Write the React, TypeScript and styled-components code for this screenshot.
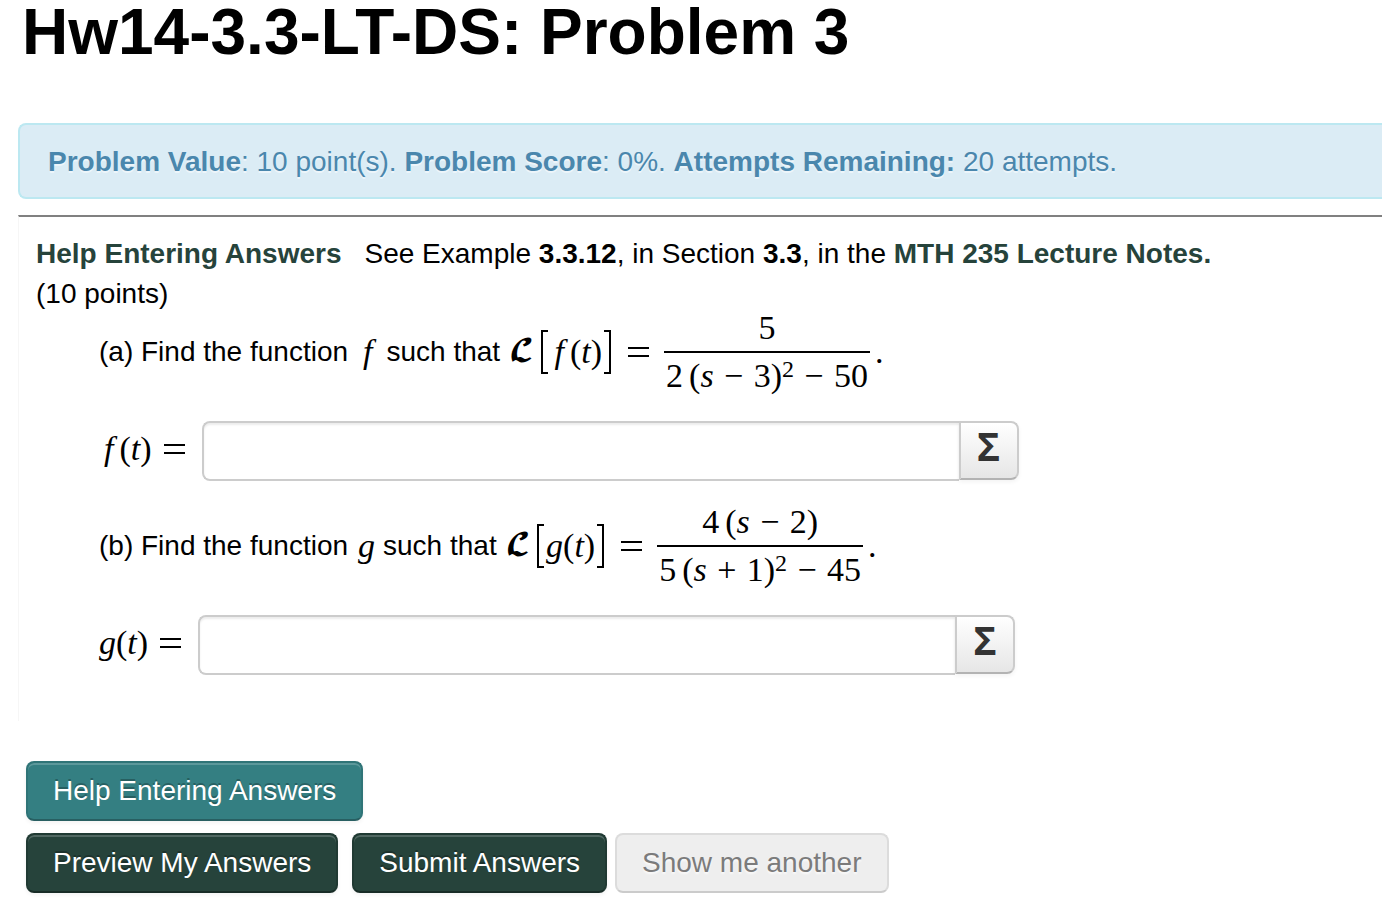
import React from "react";
import styled, { createGlobalStyle } from "styled-components";

const GlobalStyle = createGlobalStyle`
  *, *::before, *::after { box-sizing: border-box; }
  body {
    margin: 0;
    background: #fff;
    color: #000;
    font-family: "Liberation Sans", Arial, sans-serif;
    font-size: 28px;
    line-height: 40px;
    overflow-x: hidden;
  }
`;

const Page = styled.main`
  padding: 0 0 8px 18px;
`;

const Title = styled.h1`
  margin: 0 0 59px;
  padding-left: 4px;
  font-size: 64px;
  line-height: 64px;
  font-weight: 700;
`;

const Alert = styled.p`
  margin: 0 0 16px;
  padding: 17px 28px 15px;
  border: 2px solid #bce8f1;
  border-right: 0;
  border-radius: 8px 0 0 8px;
  background: #dbecf5;
  color: #4a87ad;
  text-shadow: 0 2px 0 rgba(255, 255, 255, 0.5);
`;

const Problem = styled.section`
  margin-bottom: 40px;
  padding: 17px 16px 19px 17px;
  border-top: 2px solid #808080;
  border-left: 1px solid #f6f6f6;
`;

const Intro = styled.p`
  margin: 0;
`;

const NotesLink = styled.a`
  color: #26433b;
  font-weight: 700;
  text-decoration: none;
`;

const HelpLink = styled(NotesLink)`
  margin-right: 23px;
`;

const Part = styled.div`
  padding-left: 63px;
`;

const Question = styled.div`
  display: flex;
  align-items: center;
  height: 76px;
  margin-bottom: 31px;
  white-space: pre;
`;

const MathText = styled.span`
  font-family: "Liberation Serif", "Times New Roman", serif;
  font-size: 34px;
`;

const Letter = styled.i<{ $wide: boolean }>`
  padding: ${(p) => (p.$wide ? "0 6px 0 5px" : "0")};
`;

const Variable = styled(MathText)`
  margin: 0 8px 0 10px;
`;

const Script = styled.span`
  margin: 0 7px 0 9px;
  font-family: "DejaVu Math TeX Gyre", "DejaVu Serif", serif;
  font-size: 28px;
`;

const Bracketed = styled(MathText)`
  position: relative;
  padding: 0 9px;
  line-height: 44px;

  &::before, &::after {
    content: "";
    position: absolute;
    top: 0;
    bottom: 0;
    width: 7px;
    border: 2px solid #000;
  }
  &::before { left: 0; border-right: 0; }
  &::after { right: 0; border-left: 0; }
`;

const Equals = styled.span`
  display: inline-block;
  width: 21px;
  height: 10px;
  border: solid #000;
  border-width: 2px 0;
  color: transparent;
  font-size: 8px;
  line-height: 8px;
  overflow: hidden;
`;

const EqualsGap = styled.span`
  display: flex;
  align-items: center;
  margin: 0 15px 0 17px;
`;

const Fraction = styled(MathText)`
  display: flex;
  flex-direction: column;
  align-items: stretch;
  text-align: center;
`;

const Numerator = styled.span`
  height: 38px;
  line-height: 26px;
  border-bottom: 2px solid #000;
`;

const Denominator = styled.span`
  height: 36px;
  padding: 0 2px;
  line-height: 46px;
`;

const Factor = styled.span`
  margin-right: 6px;
`;

const Operator = styled.span`
  display: inline-block;
  width: 40px;
  text-align: center;
`;

const Power = styled.sup`
  font-size: 24px;
  line-height: 0;
  vertical-align: 10px;
`;

const Period = styled(MathText)`
  margin-left: 5px;
`;

const AnswerRow = styled.div`
  display: flex;
  align-items: center;
  margin-bottom: 27px;
`;

const AnswerLabel = styled.label`
  display: flex;
  align-items: center;
  gap: 12px;
  margin-right: 17px;
  padding-bottom: 4px;
`;

const AnswerInput = styled.input`
  width: 757px;
  height: 60px;
  padding: 8px 12px;
  border: 2px solid #ccc;
  border-right-width: 0;
  border-radius: 8px 0 0 8px;
  background: #fff;
  box-shadow: inset 0 2px 2px rgba(0, 0, 0, 0.075);
  font: inherit;
  outline: none;
`;

const SigmaButton = styled.button`
  width: 60px;
  height: 59px;
  align-self: flex-start;
  padding: 0 0 10px;
  border: 2px solid #ccc;
  border-bottom-color: #b3b3b3;
  border-radius: 0 8px 8px 0;
  background: linear-gradient(#fff, #e6e6e6);
  box-shadow: 0 2px 4px rgba(0, 0, 0, 0.05);
  color: #333;
  font: 700 39px/45px "Open Sans", sans-serif;
`;

const Actions = styled.form`
  display: flex;
  flex-direction: column;
  align-items: flex-start;
  gap: 12px;
  padding-left: 8px;
`;

const ActionRow = styled.div`
  display: flex;
  gap: 14px;
`;

const ButtonPair = styled.div`
  display: flex;
  gap: 8px;
`;

const Button = styled.button<{ $tone: "teal" | "dark" }>`
  height: 60px;
  padding: 0 25px;
  border: 2px solid;
  border-color: ${(p) => (p.$tone === "teal" ? "#2f7477 #2f7477 #285f62" : "#203a33 #203a33 #182c27")};
  border-radius: 8px;
  background: ${(p) => (p.$tone === "teal" ? "#347f82" : "#26433b")};
  box-shadow: inset 0 2px 0 rgba(255, 255, 255, 0.2), 0 2px 4px rgba(0, 0, 0, 0.05);
  color: #fff;
  font: inherit;
  text-shadow: 0 -2px 0 rgba(0, 0, 0, 0.25);
  white-space: nowrap;

  &:disabled {
    border-color: #dcdcdc #dcdcdc #cbcbcb;
    background: #eee;
    box-shadow: none;
    color: #7b7b7b;
    text-shadow: 0 2px 2px rgba(255, 255, 255, 0.75);
  }
`;

function EqualSign() {
  return <Equals>=</Equals>;
}

function FunctionOfT({ name }: { name: string }) {
  return (
    <>
      <Letter $wide={name === "f"}>{name}</Letter>(<i>t</i>)
    </>
  );
}

type ProblemPartProps = {
  letter: string;
  name: string;
  numerator: React.ReactNode;
  denominator: React.ReactNode;
};

function ProblemPart({ letter, name, numerator, denominator }: ProblemPartProps) {
  const id = `answer-${name}`;
  return (
    <Part>
      <Question>
        <span>({letter}) Find the function</span>
        <Variable>
          <Letter $wide={name === "f"}>{name}</Letter>
        </Variable>
        <span>such that</span>
        <Script>𝓛</Script>
        <Bracketed>
          <FunctionOfT name={name} />
        </Bracketed>
        <EqualsGap><EqualSign /></EqualsGap>
        <Fraction>
          <Numerator>{numerator}</Numerator>
          <Denominator>{denominator}</Denominator>
        </Fraction>
        <Period>.</Period>
      </Question>
      <AnswerRow>
        <AnswerLabel htmlFor={id}>
          <MathText><FunctionOfT name={name} /></MathText>
          <EqualSign />
        </AnswerLabel>
        <AnswerInput id={id} type="text" />
        <SigmaButton type="button" aria-label="Equation editor">Σ</SigmaButton>
      </AnswerRow>
    </Part>
  );
}

export default function App() {
  return (
    <>
      <GlobalStyle />
      <Page>
        <Title>Hw14-3.3-LT-DS: Problem 3</Title>
        <Alert>
          <b>Problem Value</b>: 10 point(s). <b>Problem Score</b>: 0%. <b>Attempts Remaining:</b> 20 attempts.
        </Alert>
        <Problem>
          <Intro>
            <HelpLink href="#help">Help Entering Answers</HelpLink>
            See Example <b>3.3.12</b>, in Section <b>3.3</b>, in the{" "}
            <NotesLink href="#notes">MTH 235 Lecture Notes.</NotesLink>
            <br />
            (10 points)
          </Intro>
          <ProblemPart
            letter="a"
            name="f"
            numerator="5"
            denominator={
              <>
                <Factor>2</Factor>(<i>s</i><Operator>−</Operator>3)<Power>2</Power>
                <Operator>−</Operator>50
              </>
            }
          />
          <ProblemPart
            letter="b"
            name="g"
            numerator={<><Factor>4</Factor>(<i>s</i><Operator>−</Operator>2)</>}
            denominator={
              <>
                <Factor>5</Factor>(<i>s</i><Operator>+</Operator>1)<Power>2</Power>
                <Operator>−</Operator>45
              </>
            }
          />
        </Problem>
        <Actions onSubmit={(e) => e.preventDefault()}>
          <Button type="button" $tone="teal">Help Entering Answers</Button>
          <ActionRow>
            <Button type="button" $tone="dark">Preview My Answers</Button>
            <ButtonPair>
              <Button type="submit" $tone="dark">Submit Answers</Button>
              <Button type="button" $tone="dark" disabled>Show me another</Button>
            </ButtonPair>
          </ActionRow>
        </Actions>
      </Page>
    </>
  );
}
